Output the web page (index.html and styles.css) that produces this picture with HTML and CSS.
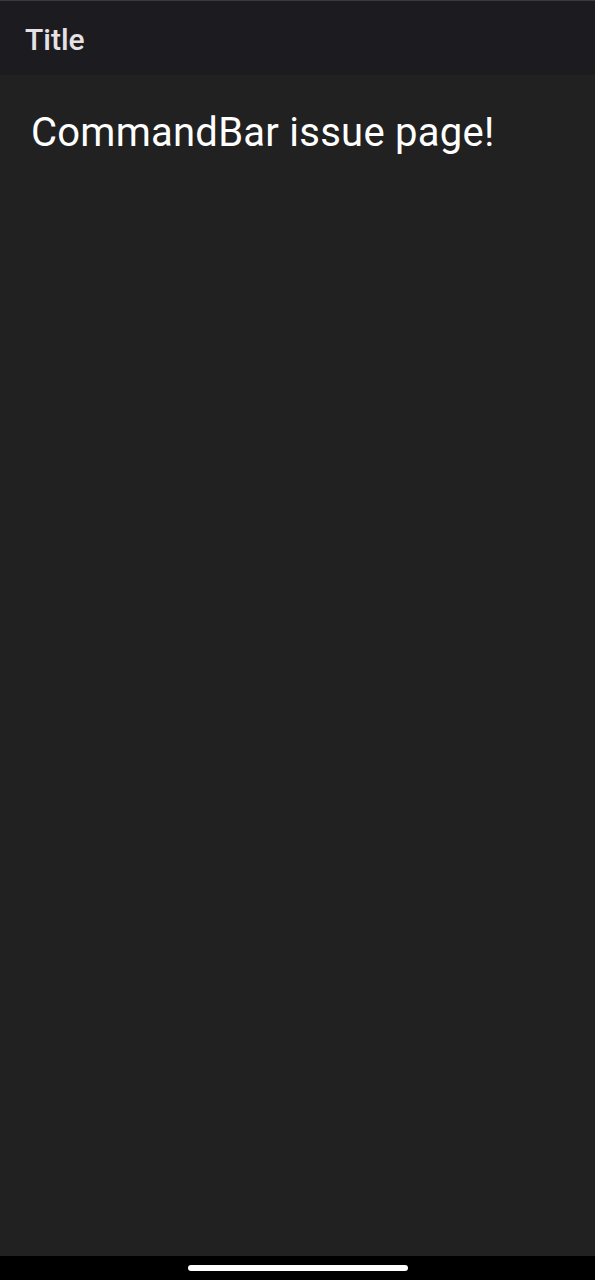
FILE: index.html
```html
<!DOCTYPE html>
<html>
<head>
<meta charset="utf-8">
<link rel="stylesheet" href="styles.css">
</head>
<body>
<div class="screen">
  <header class="appbar"><span class="title">Title</span></header>
  <main class="content"><p class="message">CommandBar issue page!</p></main>
  <div class="navbar"><div class="handle"></div></div>
</div>
</body>
</html>
```
FILE: styles.css
```css
html, body { margin: 0; padding: 0; background: #212121; }
.screen {
  width: 595px; height: 1280px;
  display: flex; flex-direction: column;
  font-family: Roboto, "Noto Sans", sans-serif;
}
.appbar {
  height: 75px; box-sizing: border-box;
  border-top: 1px solid #3c3c3e;
  background: #1c1b1f;
  display: flex; align-items: center;
  padding-left: 25px; padding-top: 3px;
}
.title {
  color: #e6e1e5; font-weight: 500; font-size: 30px;
  line-height: 1;
}
.content { flex: 1; background: #212121; padding: 0 31px; }
.message {
  margin: 34px 0 0 0; color: #ffffff; font-size: 40px; line-height: 48px;
  font-weight: 400; letter-spacing: 0.25px;
}
.navbar {
  height: 24px; background: #000;
  display: flex; justify-content: center; padding-top: 9px; box-sizing: border-box;
}
.handle { width: 220px; height: 6px; border-radius: 3px; background: #fff; }
```
